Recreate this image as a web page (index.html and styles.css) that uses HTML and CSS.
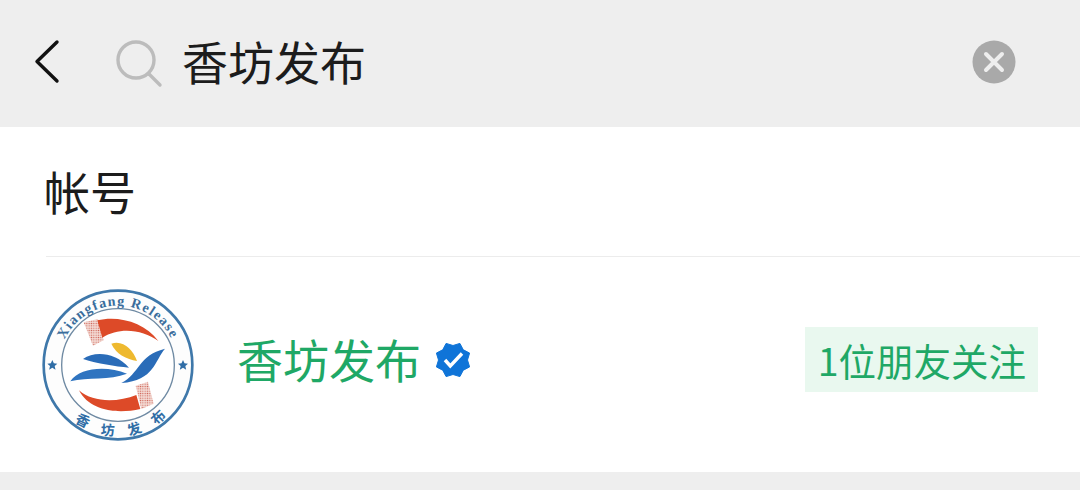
FILE: index.html
```html
<!doctype html>

<html lang="zh-CN">

<head>
  <meta charset="utf-8">

  <title>香坊发布</title>

  <link rel="stylesheet" href="styles.css">
</head>

<body>

  <div class="page">

    <div class="search-bar">
      <svg class="back-icon" viewBox="0 0 30 50" width="30" height="50">
        <path d="M24 5 L4 24.5 L24 44" fill="none" stroke="#111" stroke-width="3.4" stroke-linecap="round" stroke-linejoin="round"/>
      </svg>
      <svg class="search-icon" viewBox="0 0 50 50" width="50" height="50">
        <circle cx="21" cy="21" r="18" fill="none" stroke="#bcbcbc" stroke-width="3.4"/>
        <path d="M34 35 L45 46" fill="none" stroke="#bcbcbc" stroke-width="3.4" stroke-linecap="round"/>
      </svg>
      <div class="search-text">香坊发布</div>
      <svg class="clear-icon" viewBox="0 0 44 44" width="44" height="44">
        <circle cx="22" cy="22" r="21.5" fill="#a9a9a9"/>
        <path d="M14 14 L30 30 M30 14 L14 30" fill="none" stroke="#eeeeee" stroke-width="4" stroke-linecap="round"/>
      </svg>
    </div>

    <div class="section-title"><span>帐号</span></div>

    <div class="account-row">
      <svg class="logo" viewBox="37 26 456 456" width="152" height="152">
        <defs>
          <pattern id="hatch" width="7" height="7" patternUnits="userSpaceOnUse">
            <rect width="7" height="7" fill="#f4dcd6"/>
            <circle cx="3.5" cy="3.5" r="2" fill="#d0685c"/>
          </pattern>
          <path id="top-arc" d="M87 254 A178 178 0 0 1 443 254"/>
          <path id="bottom-arc" d="M53 254 A212 212 0 0 0 477 254"/>
        </defs>
        <circle cx="265" cy="254" r="223" fill="#fdfdfd" stroke="#3f78aa" stroke-width="8"/>
        <circle cx="265" cy="254" r="169" fill="#fff" stroke="#6f8aa3" stroke-width="4"/>

        <text class="logo-en"><textPath href="#top-arc" startOffset="50%" text-anchor="middle">Xiangfang Release</textPath></text>
        <text class="logo-cn"><textPath href="#bottom-arc" startOffset="55%" text-anchor="middle">香坊发布</textPath></text>

        <path d="M68 239 L72.500 249 L83 250 L75 257 L77.500 268 L68 262.500 L58.500 268 L61 257 L53 250 L63.500 249 Z" fill="#2f6da6"/>
        <path d="M460 239 L464.500 249 L475 250 L467 257 L469.500 268 L460 262.500 L450.500 268 L453 257 L445 250 L455.500 249 Z" fill="#2f6da6"/>

        <path d="M162 126 L205 116 L222 180 L190 196 Z" fill="url(#hatch)"/>
        <path d="M203 120 C265 105 345 125 386 182 C340 148 270 138 218 172 Z" fill="#dd4a28"/>
        <path d="M318 316 L355 304 L372 370 L335 386 Z" fill="url(#hatch)"/>
        <path d="M148 330 C190 368 265 366 320 344 L332 386 C262 402 180 392 148 330 Z" fill="#dd4a28"/>

        <path d="M245 190 C280 178 310 208 322 242 C290 236 260 222 245 190 Z" fill="#eeb92f"/>
        <path d="M160 236 C195 212 255 215 298 262 C255 258 205 250 160 236 Z" fill="#2a6cb8"/>
        <path d="M122 303 C150 262 230 255 292 280 C240 300 175 290 122 303 Z" fill="#2f74c0"/>
        <path d="M275 308 C330 280 325 225 406 205 C375 240 375 300 275 308 Z" fill="#2a6cb8"/>
      </svg>

      <div class="account-name">
        <span>香坊发布</span>
        <svg class="verified" viewBox="0 0 40 40" width="40" height="40">
          <path d="M13.1 3.4 L20 5.5 L26.9 3.4 L30.25 9.75 L36.6 13.1 L34.5 20 L36.6 26.9 L30.25 30.25 L26.9 36.6 L20 34.5 L13.1 36.6 L9.75 30.25 L3.4 26.9 L5.5 20 L3.4 13.1 L9.75 9.75 Z" fill="#0f74d8" stroke="#0f74d8" stroke-width="1" stroke-linejoin="round"/>
          <path d="M12 20 L17.3 26 L29 13.5" fill="none" stroke="#fff" stroke-width="3.4"/>
        </svg>
      </div>

      <div class="friends-tag">1位朋友关注</div>
    </div>

    <div class="footer-band"></div>

  </div>

</body>

</html>
```

FILE: styles.css
```css
body {
  margin: 0;
  background-color: #fff;
  font-family: "Noto Sans CJK SC", "Noto Sans", sans-serif;
}

.page {
  display: flex;
  flex-direction: column;
  width: 1080px;
  height: 490px;
  overflow: hidden;
}

.search-bar {
  display: flex;
  align-items: center;
  height: 127px;
  padding: 0 64px 3px 33px;
  box-sizing: border-box;
  background-color: #eeeeee;
}

.back-icon {
  margin-right: 52px;
}

.search-icon {
  margin-right: 17px;
  margin-top: 4px;
}

.search-text {
  margin-bottom: 5px;
  font-size: 46px;
  line-height: 60px;
  color: #1c1c1c;
}

.clear-icon {
  margin-left: auto;
}

.section-title {
  display: flex;
  align-items: center;
  height: 129px;
  margin-left: 46px;
  border-bottom: 1px solid #ececec;
  font-size: 46px;
  color: #1c1c1c;
}

.section-title span {
  margin-left: -2px;
  margin-bottom: 4px;
}

.account-row {
  display: flex;
  align-items: center;
  height: 215px;
  padding: 0 42px;
}

.logo {
  margin-right: 43px;
}

.account-name {
  display: flex;
  align-items: center;
  margin-bottom: 10px;
  font-size: 46px;
  line-height: 60px;
  color: #1fa866;
}

.account-name span {
  margin-bottom: 3px;
}

.verified {
  margin-left: 12px;
}

.friends-tag {
  display: flex;
  align-items: center;
  margin-left: auto;
  margin-bottom: 10px;
  height: 65px;
  padding: 0 12px 0 13px;
  background-color: #e9f8ef;
  font-size: 37.5px;
  color: #1fa866;
}

.footer-band {
  flex: 1;
  background-color: #eeeeee;
}

.logo-en {
  font-family: "Liberation Serif", serif;
  font-size: 42px;
  font-weight: bold;
  letter-spacing: 4px;
  fill: #3a6d9c;
}

.logo-cn {
  font-family: "Noto Sans CJK SC", sans-serif;
  font-size: 42px;
  font-weight: bold;
  letter-spacing: 44px;
  fill: #2f6da6;
}
```
